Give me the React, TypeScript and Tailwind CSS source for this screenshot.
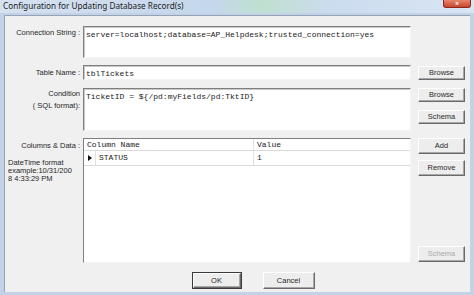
import type { ReactNode } from 'react';

const labelFont = "font-['Liberation_Sans',Arial,sans-serif] text-[7.5px] text-[#262626]";
const monoFont = "font-['Liberation_Mono','Courier_New',monospace] text-[8px] text-[#1a1a1a]";

function TextBox({ children, className = '' }: { children?: ReactNode; className?: string }) {
  return (
    <div
      className={`border border-t-[#7f7f7f] border-l-[#7f7f7f] border-b-[#f4f4f4] border-r-[#f4f4f4] bg-white px-[2px] pt-[2px] leading-[11px] shadow-[inset_1px_1px_0_#c9c9c9] ${monoFont} ${className}`}
    >
      {children}
    </div>
  );
}

function Button({
  children,
  disabled = false,
  isDefault = false,
  className = '',
}: {
  children: ReactNode;
  disabled?: boolean;
  isDefault?: boolean;
  className?: string;
}) {
  return (
    <div className={`${isDefault ? 'border border-[#3a3a3a]' : ''} ${className}`}>
      <div
        className={`flex h-full items-center justify-center border border-t-white border-l-white border-b-[#6a6a6a] border-r-[#6a6a6a] bg-[#ededed] shadow-[inset_-1px_-1px_0_#a8a8a8] font-['Liberation_Sans',Arial,sans-serif] text-[7.5px] ${
          disabled ? 'text-[#a9a9a9]' : 'text-[#2a2a2a]'
        }`}
      >
        {children}
      </div>
    </div>
  );
}

function Label({ children, className = '' }: { children: ReactNode; className?: string }) {
  return <div className={`text-right leading-[11px] ${labelFont} ${className}`}>{children}</div>;
}

export default function App() {
  return (
    <div className="flex h-[295px] w-[474px] flex-col overflow-hidden bg-[#c3d2e6]">
      {/* title bar */}
      <div className="relative flex h-[13px] shrink-0 items-center bg-[linear-gradient(90deg,#d6e2f1_0%,#cfdcee_20%,#c4d7ec_45%,#bfe0cf_55%,#cbdcef_70%,#d9e5f3_100%)] pl-[3px]">
        <span className="font-['Noto_Sans',Arial,sans-serif] text-[8.2px] leading-none text-[#1c1c1c]">
          Configuration for Updating Database Record(s)
        </span>
        <div className="absolute right-[3px] top-0 flex h-[8px] w-[28px] items-center justify-center rounded-b-[3px] border border-t-0 border-[#8b2a1c] bg-[linear-gradient(180deg,#e8866f,#c8452c)] text-[7px] font-bold leading-none text-white">
          ×
        </div>
      </div>

      {/* content panel */}
      <div className="ml-[4px] mr-[4px] mt-[2px] mb-[3px] flex flex-1 flex-col border-l border-t border-[#95a3b6] bg-[#f0f0f0] pt-[10px]">
        <div className="grid grid-cols-[75px_328px_46px] gap-x-[3px] gap-y-[7px]">
          {/* connection string */}
          <Label className="pt-[1px]">Connection String :</Label>
          <TextBox className="h-[32px]">server=localhost;database=AP_Helpdesk;trusted_connection=yes</TextBox>
          <div />

          {/* table name */}
          <Label className="self-center">Table Name :</Label>
          <TextBox className="h-[15px]">tblTickets</TextBox>
          <Button className="ml-[4px] h-[14px] w-[47px] self-center">Browse</Button>

          {/* condition */}
          <Label className="pt-[1px] leading-[12px]">
            Condition
            <br />( SQL format):
          </Label>
          <TextBox className="mt-[1px] h-[43px]">TicketID = ${'{'}/pd:myFields/pd:TktID{'}'}</TextBox>
          <div className="ml-[4px] flex flex-col gap-[8px] pt-[1px]">
            <Button className="h-[14px] w-[47px]">Browse</Button>
            <Button className="h-[14px] w-[47px]">Schema</Button>
          </div>

          {/* columns & data */}
          <div className="flex flex-col">
            <Label className="pt-[2px]">Columns &amp; Data :</Label>
            <div className={`mt-[8px] pl-[3px] text-left leading-[8.2px] ${labelFont}`}>
              DateTime format
              <br />
              example:10/31/200
              <br />8 4:33:29 PM
            </div>
          </div>
          <div className="flex h-[125px] flex-col border border-t-[#7f7f7f] border-l-[#7f7f7f] border-b-[#f4f4f4] border-r-[#f4f4f4] bg-white">
            <div className={`flex h-[12px] border-b border-[#dadada] leading-[12px] ${monoFont}`}>
              <div className="w-[170px] border-r border-[#e2e2e2] pl-[3px]">Column Name</div>
              <div className="flex-1 pl-[3px]">Value</div>
            </div>
            <div className={`flex h-[15px] border-b border-[#dadada] leading-[14px] ${monoFont}`}>
              <div className="flex w-[12px] items-center justify-center border-r border-[#e2e2e2]">
                <svg width="4" height="6" viewBox="0 0 4 6">
                  <path d="M0 0 L4 3 L0 6 Z" fill="#111" />
                </svg>
              </div>
              <div className="w-[158px] border-r border-[#e2e2e2] pl-[3px]">STATUS</div>
              <div className="flex-1 pl-[3px]">1</div>
            </div>
          </div>
          <div className="ml-[4px] flex flex-col justify-between pb-[1px]">
            <div className="flex flex-col gap-[6px]">
              <Button className="h-[16px] w-[47px]">Add</Button>
              <Button className="h-[16px] w-[47px]">Remove</Button>
            </div>
            <Button disabled className="h-[16px] w-[47px]">
              Schema
            </Button>
          </div>
        </div>

        {/* bottom buttons */}
        <div className="mt-[9px] flex justify-center gap-[21px] pl-[31px]">
          <Button isDefault className="h-[17px] w-[50px]">
            OK
          </Button>
          <Button className="h-[17px] w-[52px]">Cancel</Button>
        </div>
      </div>
    </div>
  );
}
